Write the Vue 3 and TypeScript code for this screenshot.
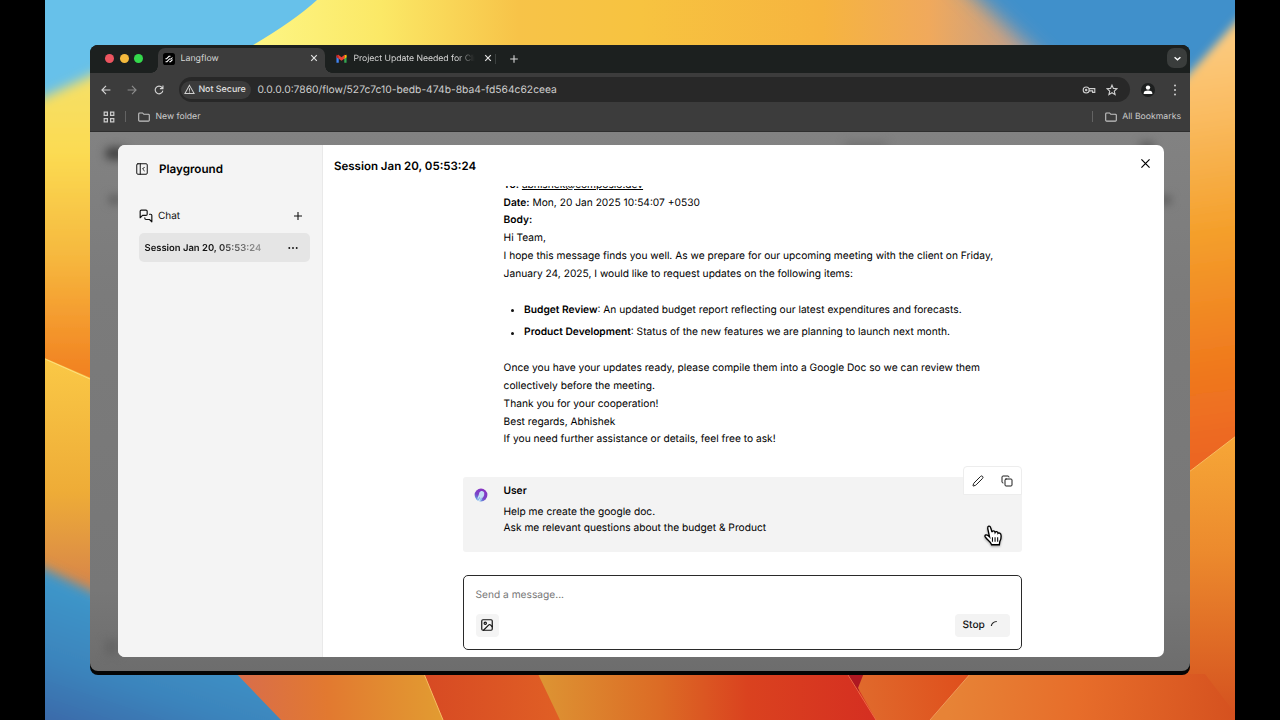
<script setup lang="ts">
interface Line {
  label?: string
  text?: string
}

const opening: Line[] = [
  { label: 'Date:', text: ' Mon, 20 Jan 2025 10:54:07 +0530' },
  { label: 'Body:' },
  { text: 'Hi Team,' },
  { text: 'I hope this message finds you well. As we prepare for our upcoming meeting with the client on Friday,' },
  { text: 'January 24, 2025, I would like to request updates on the following items:' },
]

const bullets: Line[] = [
  { label: 'Budget Review', text: ': An updated budget report reflecting our latest expenditures and forecasts.' },
  { label: 'Product Development', text: ': Status of the new features we are planning to launch next month.' },
]

const closing: string[] = [
  'Once you have your updates ready, please compile them into a Google Doc so we can review them',
  'collectively before the meeting.',
  'Thank you for your cooperation!',
  'Best regards, Abhishek',
  'If you need further assistance or details, feel free to ask!',
]

const session = 'Session Jan 20, 05:53:24'
</script>

<template>
  <div class="desktop">
    <svg class="wallpaper" viewBox="0 0 1280 720" aria-hidden="true">
      <defs>
        <filter id="soft" x="-20%" y="-20%" width="140%" height="140%"><feGaussianBlur stdDeviation="6" /></filter>
        <filter id="softer" x="-30%" y="-30%" width="160%" height="160%"><feGaussianBlur stdDeviation="10" /></filter>
        <filter id="softright" filterUnits="userSpaceOnUse" x="1130" y="-60" width="260" height="640"><feGaussianBlur stdDeviation="4.5" /></filter>
        <linearGradient id="top" gradientUnits="userSpaceOnUse" x1="260" y1="0" x2="1020" y2="0">
          <stop offset="0" stop-color="#fdf583" /><stop offset=".16" stop-color="#fbe866" />
          <stop offset=".34" stop-color="#f7c348" /><stop offset=".5" stop-color="#f7c340" />
          <stop offset=".74" stop-color="#f6b43f" /><stop offset=".88" stop-color="#f0a95c" /><stop offset="1" stop-color="#c4a089" />
        </linearGradient>
        <linearGradient id="left" gradientUnits="userSpaceOnUse" x1="0" y1="80" x2="0" y2="370">
          <stop offset="0" stop-color="#f6e067" /><stop offset=".25" stop-color="#fbdb52" />
          <stop offset=".6" stop-color="#f6b93f" /><stop offset="1" stop-color="#f28322" />
        </linearGradient>
        <linearGradient id="left2" gradientUnits="userSpaceOnUse" x1="0" y1="360" x2="0" y2="580">
          <stop offset="0" stop-color="#fac846" /><stop offset=".6" stop-color="#eeac37" /><stop offset="1" stop-color="#d98848" />
        </linearGradient>
        <linearGradient id="blue" gradientUnits="userSpaceOnUse" x1="110" y1="580" x2="60" y2="730">
          <stop offset="0" stop-color="#3f9bcd" /><stop offset=".6" stop-color="#3b84bc" /><stop offset="1" stop-color="#3a68a8" />
        </linearGradient>
        <linearGradient id="b1" gradientUnits="userSpaceOnUse" x1="245" y1="700" x2="440" y2="690">
          <stop offset="0" stop-color="#d96e49" /><stop offset=".42" stop-color="#e27930" /><stop offset="1" stop-color="#e29b31" />
        </linearGradient>
        <linearGradient id="b2" gradientUnits="userSpaceOnUse" x1="425" y1="0" x2="560" y2="0">
          <stop offset="0" stop-color="#d74a23" /><stop offset="1" stop-color="#e05f25" />
        </linearGradient>
        <linearGradient id="b3" gradientUnits="userSpaceOnUse" x1="540" y1="0" x2="875" y2="0">
          <stop offset="0" stop-color="#dd9433" /><stop offset=".36" stop-color="#dc6b25" />
          <stop offset=".62" stop-color="#da421f" /><stop offset="1" stop-color="#d52f21" />
        </linearGradient>
        <linearGradient id="b4" gradientUnits="userSpaceOnUse" x1="860" y1="700" x2="960" y2="680">
          <stop offset="0" stop-color="#e06a2c" /><stop offset="1" stop-color="#df501d" />
        </linearGradient>
        <linearGradient id="b5" gradientUnits="userSpaceOnUse" x1="950" y1="690" x2="1235" y2="720">
          <stop offset="0" stop-color="#e78336" /><stop offset=".45" stop-color="#e76d2a" /><stop offset="1" stop-color="#d5511f" />
        </linearGradient>
        <linearGradient id="right" gradientUnits="userSpaceOnUse" x1="1180" y1="50" x2="1235" y2="450">
          <stop offset="0" stop-color="#fcc97c" /><stop offset=".15" stop-color="#fabd64" />
          <stop offset=".45" stop-color="#f4a02c" /><stop offset=".78" stop-color="#f07a1e" /><stop offset="1" stop-color="#ec6623" />
        </linearGradient>
        <linearGradient id="right2" gradientUnits="userSpaceOnUse" x1="0" y1="440" x2="0" y2="720">
          <stop offset="0" stop-color="#f6a637" /><stop offset=".4" stop-color="#ec8a2d" /><stop offset="1" stop-color="#d4501f" />
        </linearGradient>
      </defs>
      <rect width="1280" height="720" fill="#67c1ea" />
      <path filter="url(#soft)" d="M10 113 L120 62 L140 420 L10 420Z" fill="url(#left)" />
      <path d="M317 0 Q294 21 253 45 L640 100 L1100 100 L1100 0Z" fill="url(#top)" />
      <path filter="url(#softer)" d="M946 -30 L1055 70 L1300 90 L1300 -30Z" fill="#4090cb" />
      <path filter="url(#softright)" d="M1300 -50 L1150 118 L1150 520 L1300 520Z" fill="url(#right)" />
      <path d="M40 356 L100 382 L100 600 L40 600Z" fill="url(#left2)" />
      <path d="M45 359 L90 379" stroke="#fde080" stroke-width="1" />
      <path filter="url(#soft)" d="M10 552 L110 600 L420 620 L420 780 L10 780Z" fill="url(#blue)" />
      <path d="M185 620 L460 620 L460 720 L281 720Z" fill="url(#b1)" />
      <path d="M406 630 L600 630 L600 720 L443 720Z" fill="url(#b2)" />
      <path d="M406 630 L443 720" stroke="#f6bd62" />
      <path d="M517 630 L890 630 L890 720 L560 720Z" fill="url(#b3)" />
      <path d="M820 630 L890 630 L858 692Z" fill="#ae1821" />
      <path d="M877 640 L1100 640 L1100 720 L876 720 L858 688Z" fill="url(#b4)" />
      <path d="M820 630 L876 720" stroke="#ee6a43" fill="none" />
      <path d="M1005 634 L1240 600 L1240 720 L930 720Z" fill="url(#b5)" />
      <path d="M1005 634 L930 720" stroke="#ee9959" />
      <path d="M1240 433 L1185 475 L1185 674 L1205 674 L1240 720Z" fill="url(#right2)" />
      <path d="M1240 433 L1185 475" stroke="#f8bb60" />
      <rect width="45" height="720" fill="#000" />
      <rect x="1235" width="45" height="720" fill="#000" />
    </svg>

    <div class="window">
      <div class="tabbar">
        <div class="lights"><i class="red" /><i class="yellow" /><i class="green" /></div>
        <div class="tab active">
          <svg class="favicon" viewBox="0 0 12 12">
            <rect width="12" height="12" rx="2.6" fill="#000" />
            <path d="M2.4 5.7H3.7L6 3.3H7.5M2.5 8.7H4L6.5 6H8L9.5 4.5M6.3 8.7H7.4L9.6 6.6" fill="none" stroke="#fff" stroke-width="1.05" />
          </svg>
          <span class="tab-title">Langflow</span>
          <svg class="close" viewBox="0 0 8 8"><path d="M1.2 1.2 6.8 6.8M6.8 1.2 1.2 6.8" /></svg>
        </div>
        <div class="tab second">
          <svg class="gmail" viewBox="0 0 12 9">
            <path d="M.5 1.6 V9 H3 V4Z" fill="#4285f4" />
            <path d="M11.5 1.6 V9 H9 V4Z" fill="#34a853" />
            <path d="M9 1 L11.5 .3 V3 L9 5Z" fill="#fbbc04" />
            <path d="M.5 .3 L3 1 V5 L.5 3Z" fill="#c5221f" />
            <path d="M2.2 .2 L6 3.2 L9.8 .2 L9 4.8 L6 7 L3 4.8Z" fill="#ea4335" />
          </svg>
          <span class="tab-title fade">Project Update Needed for Cli</span>
          <svg class="close" viewBox="0 0 8 8"><path d="M1.2 1.2 6.8 6.8M6.8 1.2 1.2 6.8" /></svg>
        </div>
        <i class="tab-sep" />
        <svg class="newtab" viewBox="0 0 10 10"><path d="M5 1.2V8.8M1.2 5H8.8" /></svg>
        <div class="tab-menu"><svg viewBox="0 0 8 8"><path d="M1.4 2.8 4 5.2 6.6 2.8" /></svg></div>
      </div>

      <div class="toolbar">
        <svg class="nav" viewBox="0 0 12 12"><path d="M10.8 6H1.8M6 1.6 1.6 6 6 10.4" /></svg>
        <svg class="nav dim" viewBox="0 0 12 12"><path d="M1.2 6H10.2M6 1.6 10.4 6 6 10.4" /></svg>
        <svg class="nav" viewBox="0 0 12 12"><path d="M10.2 6.6A4.2 4.2 0 1 1 9.4 3.4L10 4.3M10.3 1.2V4.5H7" /></svg>
        <div class="address">
          <div class="chip">
            <svg viewBox="0 0 12 12"><path d="M6 1.5 11 10.4H1Z" /><path d="M6 4.6V7.3M6 8.2V9.2" /></svg>
            <span>Not Secure</span>
          </div>
          <span class="url">0.0.0.0:7860/flow/527c7c10-bedb-474b-8ba4-fd564c62ceea</span>
          <svg class="key" viewBox="0 0 14 10"><circle cx="4.2" cy="5" r="3" /><circle cx="4.2" cy="5" r=".7" /><path d="M7 3.6H12.8V7.4H10.6V5.9H7" /></svg>
          <svg class="star" viewBox="0 0 12 12"><path d="M6 1.1 7.4 4.4 11 4.7 8.3 7.1 9.1 10.6 6 8.7 2.9 10.6 3.7 7.1 1 4.7 4.6 4.4Z" /></svg>
        </div>
        <svg class="profile" viewBox="0 0 14 14"><circle cx="7" cy="7" r="7" fill="#1d1f1f" /><circle cx="7" cy="4.6" r="2.2" fill="#fff" /><path d="M2.7 11V9.9Q3.2 7.5 7 7.5T11.3 9.9V11Z" fill="#fff" /></svg>
        <svg class="kebab" viewBox="0 0 4 12"><circle cx="2" cy="1.6" r="1" /><circle cx="2" cy="6" r="1" /><circle cx="2" cy="10.4" r="1" /></svg>
      </div>

      <div class="bookmarks">
        <svg class="apps" viewBox="0 0 12 12"><path d="M1.2 1.2H4.4V4.4H1.2ZM7.6 1.2H10.8V4.4H7.6ZM1.2 7.6H4.4V10.8H1.2ZM7.6 7.6H10.8V10.8H7.6Z" /></svg>
        <i class="bar" />
        <svg class="folder" viewBox="0 0 12 10"><path d="M1.6 1H4.6L5.8 2.3H10.4Q11.3 2.3 11.3 3.2V8.2Q11.3 9.1 10.4 9.1H1.6Q.7 9.1 .7 8.2V1.9Q.7 1 1.6 1Z" /></svg>
        <span>New folder</span>
        <i class="bar push" />
        <svg class="folder" viewBox="0 0 12 10"><path d="M1.6 1H4.6L5.8 2.3H10.4Q11.3 2.3 11.3 3.2V8.2Q11.3 9.1 10.4 9.1H1.6Q.7 9.1 .7 8.2V1.9Q.7 1 1.6 1Z" /></svg>
        <span>All Bookmarks</span>
      </div>

      <div class="page">
        <i class="ghost logo" /><i class="ghost node" /><i class="ghost controls" />
        <i class="ghost head" /><i class="ghost avatar" /><i class="ghost item" />
        <div class="modal">
          <aside class="sidebar">
            <div class="side-head">
              <svg class="panel lucide" viewBox="0 0 24 24"><rect x="3" y="3" width="18" height="18" rx="2" /><path d="M9 3v18M16 15l-3-3 3-3" /></svg>
              <h2>Playground</h2>
            </div>
            <div class="chat-row">
              <svg class="msgs lucide" viewBox="0 0 24 24"><path d="M14 9a2 2 0 0 1-2 2H6l-4 4V4c0-1.1.9-2 2-2h8a2 2 0 0 1 2 2zM18 9h2a2 2 0 0 1 2 2v11l-4-4h-6a2 2 0 0 1-2-2v-1" /></svg>
              <span>Chat</span>
              <svg class="plus" viewBox="0 0 10 10"><path d="M5 1V9M1 5H9" /></svg>
            </div>
            <div class="session">
              <span>{{ session }}</span>
              <svg viewBox="0 0 10 4"><circle cx="1.3" cy="2" r=".95" /><circle cx="5" cy="2" r=".95" /><circle cx="8.7" cy="2" r=".95" /></svg>
            </div>
          </aside>

          <main class="main">
            <header class="main-head">
              <h1>{{ session }}</h1>
              <svg viewBox="0 0 10 10"><path d="M1.3 1.3 8.7 8.7M8.7 1.3 1.3 8.7" /></svg>
            </header>
            <div class="scroll">
              <div class="reply">
                <p><b>To:</b> <u>abhishek@composio.dev</u></p>
                <p v-for="(l, i) in opening" :key="i"><b v-if="l.label">{{ l.label }}</b>{{ l.text }}</p>
                <ul>
                  <li v-for="b in bullets" :key="b.label"><b>{{ b.label }}</b>{{ b.text }}</li>
                </ul>
                <p v-for="c in closing" :key="c">{{ c }}</p>
              </div>
              <div class="user">
                <svg class="avatar-icon" viewBox="0 0 14 14">
                  <defs>
                    <linearGradient id="ring" x1=".8" y1="0" x2=".2" y2="1">
                      <stop offset="0" stop-color="#8a2fc0" /><stop offset=".6" stop-color="#7a45c8" /><stop offset="1" stop-color="#58b5e8" />
                    </linearGradient>
                  </defs>
                  <circle cx="7" cy="7" r="6.4" fill="url(#ring)" />
                  <path d="M3.6 12.4Q3 9.6 4.7 7Q4.9 4.2 7 3.1Q9.3 2.5 10.2 4.6Q10.6 7 9.3 9.1Q8.3 9.8 8 11L6.7 12.9Q5 13.3 3.6 12.4Z" fill="#c3dcf5" />
                  <path d="M3.8 12.1Q5.2 11.3 5.6 9.3M6.7 12.6 7.3 9.8" stroke="#6fa9e6" stroke-width=".9" fill="none" />
                </svg>
                <div class="user-text">
                  <h3>User</h3>
                  <p>Help me create the google doc.</p>
                  <p>Ask me relevant questions about the budget &amp; Product</p>
                </div>
                <div class="actions">
                  <svg class="lucide" viewBox="0 0 24 24"><path d="M21.17 6.81a1 1 0 0 0-3.99-3.99L3.84 16.17a2 2 0 0 0-.5.83l-1.32 4.35a.5.5 0 0 0 .62.62l4.35-1.32a2 2 0 0 0 .83-.5z" /></svg>
                  <svg class="lucide" viewBox="0 0 24 24"><rect x="8" y="8" width="14" height="14" rx="2" /><path d="M4 16c-1.1 0-2-.9-2-2V4c0-1.1.9-2 2-2h10c1.1 0 2 .9 2 2" /></svg>
                </div>
              </div>
            </div>
            <div class="composer">
              <div class="placeholder">Send a message...</div>
              <div class="composer-row">
                <div class="attach"><svg class="lucide" viewBox="0 0 24 24"><rect x="3" y="3" width="18" height="18" rx="2" /><circle cx="9" cy="9" r="2" /><path d="m21 15-3.09-3.09a2 2 0 0 0-2.82 0L6 21" /></svg></div>
                <div class="stop"><span>Stop</span><svg viewBox="0 0 10 10"><path d="M1.3 6Q2 1.8 6.8 1.5" /></svg></div>
              </div>
            </div>
          </main>
        </div>
      </div>
    </div>

    <svg class="cursor" viewBox="0 0 20 22">
      <path d="M6.2 12.3 4.5 4.4Q4.2 2.3 5.5 2Q6.8 1.8 7.3 3.6L8.6 7.8Q8.7 6.6 9.9 6.6Q11.2 6.6 11.5 8Q11.9 7.1 13 7.3Q14.2 7.6 14.3 8.9Q15 8.3 16 8.8Q17.3 9.5 17.3 11.5Q17.4 14.6 16 16.9L15.6 19.8H8.2Q7.6 17.9 5.2 15.8Q3 13.8 1.9 12Q1.5 10.8 2.7 10.5Q4.2 10.2 6.2 12.3Z" fill="#fff" stroke="#000" stroke-width="1.3" />
      <path d="M9 12.7V17M11.5 12.7V17M14 12.7V17" stroke="#000" stroke-width="1" fill="none" />
    </svg>
  </div>
</template>

<style>
html,
body {
  margin: 0;
  background: #000;
  overflow: hidden;
}
</style>

<style scoped>
* {
  box-sizing: border-box;
}
h1, h2, h3, p, ul {
  margin: 0;
  padding: 0;
  font-size: inherit;
}
svg, i {
  display: block;
  flex: none;
}
.desktop {
  position: relative;
  width: 1280px;
  height: 720px;
  padding: 45px 90px;
  overflow: hidden;
  font-family: Inter, "Liberation Sans", sans-serif;
  text-rendering: geometricPrecision;
}
.wallpaper {
  position: absolute;
  inset: 0;
  width: 1280px;
  height: 720px;
}
.window {
  position: relative;
  width: 1100px;
  height: 629.5px;
  border-radius: 8px;
  overflow: hidden;
  background: #050505;
  display: flex;
  flex-direction: column;
}
.tabbar {
  height: 28px;
  flex: none;
  background: #1c201f;
  display: flex;
  align-items: center;
}
.lights {
  display: flex;
  gap: 5.5px;
  padding: 0 0 1px 15px;
  width: 68px;
}
.lights i {
  width: 9px;
  height: 9px;
  border-radius: 50%;
}
.red { background: #ec5560; }
.yellow { background: #f4b93c; }
.green { background: #34d94c; }
.tab {
  display: flex;
  align-items: center;
  height: 25px;
  font-size: 8.8px;
  color: #d6d6d6;
}
.tab.active {
  position: relative;
  align-self: flex-end;
  width: 167px;
  padding: 0 7px 4px 5px;
  background: #3c3c3c;
  border-radius: 7px 7px 0 0;
}
.tab.active::before,
.tab.active::after {
  content: "";
  position: absolute;
  bottom: 0;
  width: 7px;
  height: 7px;
}
.tab.active::before {
  left: -7px;
  background: radial-gradient(circle at 0 0, transparent 6.5px, #3c3c3c 7px);
}
.tab.active::after {
  right: -7px;
  background: radial-gradient(circle at 100% 0, transparent 6.5px, #3c3c3c 7px);
}
.favicon {
  width: 12px;
  height: 12px;
  margin-right: 5.5px;
}
.tab-title {
  white-space: nowrap;
  overflow: hidden;
}
.close {
  width: 8px;
  height: 8px;
  margin-left: auto;
  fill: none;
  stroke: #e2e2e2;
  stroke-width: 1.2;
}
.second {
  width: 167px;
  padding: 0 0 1.5px 11px;
}
.second .tab-title {
  padding-top: 1px;
}
.gmail {
  width: 11px;
  height: 9px;
  margin-right: 6.5px;
}
.fade {
  width: 121px;
  font-size: 8.7px;
  letter-spacing: -.04px;
  mask-image: linear-gradient(90deg, #000 103px, transparent 121px);
}
.second .close {
  margin-right: 0.5px;
}
.tab-sep {
  width: 1px;
  height: 10px;
  margin-left: 3px;
  background: #3b403f;
}
.newtab {
  width: 10px;
  height: 10px;
  margin-left: 13px;
  fill: none;
  stroke: #d8d8d8;
  stroke-width: 1.1;
}
.tab .close,
.newtab {
  position: relative;
  top: -.5px;
}
.tab-menu {
  margin: -2px 3px 0 auto;
  width: 20px;
  height: 20px;
  border-radius: 7px;
  background: #3a3d3c;
  display: grid;
  place-items: center;
}
.tab-menu svg {
  width: 9px;
  height: 9px;
  fill: none;
  stroke: #fff;
  stroke-width: 1.2;
}
.toolbar {
  height: 33px;
  flex: none;
  background: #3c3c3c;
  display: flex;
  align-items: center;
  padding-left: 10px;
}
.nav {
  width: 12px;
  height: 12px;
  margin-right: 14.3px;
  padding: .5px;
  fill: none;
  stroke: #d4d4d4;
  stroke-width: 1.25;
}
.dim {
  stroke: #8b8b8b;
}
.address {
  width: 951.5px;
  height: 25px;
  border-radius: 13px;
  background: #282828;
  display: flex;
  align-items: center;
  padding: 0 11.5px 0 2px;
}
.chip {
  width: 70px;
  height: 18px;
  margin-left: .5px;
  border-radius: 9px;
  background: #3b3b3b;
  display: flex;
  align-items: center;
  padding-left: 2.5px;
  font-size: 8.9px;
  font-weight: 500;
  color: #e0e0e0;
  white-space: nowrap;
}
.chip svg {
  width: 11px;
  height: 11px;
  margin-right: 3.5px;
  fill: none;
  stroke: #d0d0d0;
  stroke-width: 1.1;
}
.url {
  margin-left: 6px;
  font-size: 10.29px;
  color: #cfcfcf;
}
.key {
  width: 14px;
  height: 10px;
  margin-left: auto;
  margin-right: 10px;
  fill: none;
  stroke: #cfcfcf;
  stroke-width: 1.1;
}
.star {
  width: 12px;
  height: 12px;
  fill: none;
  stroke: #cfcfcf;
  stroke-width: 1.1;
  margin-right: 1px;
}
.profile {
  width: 14px;
  height: 14px;
  margin-left: 11px;
}
.kebab {
  width: 4px;
  height: 12px;
  margin-left: 18px;
  fill: #d2d2d2;
}
.bookmarks {
  height: 26px;
  flex: none;
  padding: 0 9px 4px 13px;
  background: #3c3c3c;
  border-bottom: 1px solid #2e2e2e;
  display: flex;
  align-items: center;
  font-size: 8.7px;
  color: #cbcbcb;
}
.bookmarks span {
  padding-top: 1px;
}
.apps {
  width: 12px;
  height: 12px;
  fill: none;
  stroke: #cbcbcb;
  stroke-width: 1.2;
}
.bar {
  width: 1px;
  height: 11px;
  margin: 0 12px 0 10px;
  background: #636363;
}
.bar.push {
  margin-left: auto;
}
.folder {
  width: 12px;
  height: 10px;
  margin-right: 5.5px;
  fill: none;
  stroke: #c4c4c4;
  stroke-width: 1.1;
}
.page {
  position: relative;
  height: 539px;
  flex: none;
  padding: 13.2px 26px 0 28px;
  background: linear-gradient(#828282, #7b7b7b 30%, #777 85%, #6d6d6d);
  border-radius: 0 0 8px 8px;
  overflow: hidden;
}
.ghost {
  position: absolute;
  filter: blur(4px);
  background: #454545;
}
.logo { left: 15px; top: 15px; width: 22px; height: 13px; border-radius: 6px; }
.node { left: 19px; top: 63px; width: 12px; height: 9px; background: #5f5f5f; }
.controls { left: 15px; top: 508px; width: 14px; height: 15px; background: #656565; }
.head { left: 755px; top: 10px; width: 42px; height: 7px; background: #707070; }
.avatar { left: 1050px; top: 10px; width: 14px; height: 9px; background: #5a5a5a; }
.item { left: 1066px; top: 64px; width: 15px; height: 8px; background: #5c5c5c; }
.modal {
  position: relative;
  width: 1046px;
  height: 512px;
  display: flex;
  border-radius: 7px;
  background: #fff;
  overflow: hidden;
}
.lucide {
  fill: none;
  stroke: #111;
  stroke-width: 2;
  stroke-linecap: round;
  stroke-linejoin: round;
}
.sidebar {
  width: 205px;
  flex: none;
  background: #f4f4f4;
  border-right: 1px solid #e9e9e9;
  color: #111;
}
.side-head {
  display: flex;
  align-items: center;
  height: 18px;
  margin-top: 15px;
  padding-left: 17px;
}
.side-head h2 {
  font-size: 11.65px;
  font-weight: 600;
  color: #000;
}
.panel {
  width: 14px;
  height: 14px;
  margin-right: 10px;
  stroke-width: 1.7;
}
.chat-row {
  display: flex;
  align-items: center;
  height: 18px;
  margin: 29px 19px 0 20.5px;
  font-size: 10px;
}
.msgs {
  width: 14px;
  height: 14px;
  margin-right: 5.5px;
}
.plus {
  width: 10px;
  height: 10px;
  margin-left: auto;
  fill: none;
  stroke: #111;
  stroke-width: 1.1;
}
.session {
  display: flex;
  align-items: center;
  height: 29px;
  margin: 8px 12px 0 20.5px;
  padding: 0 12.5px 0 6px;
  border-radius: 5px;
  background: #e5e5e5;
}
.session span {
  padding-top: 1.6px;
  font-size: 9.45px;
  font-weight: 600;
  color: transparent;
  background: linear-gradient(90deg, #111 58%, #999 100%);
  background-clip: text;
}
.session svg {
  width: 10px;
  height: 4px;
  margin-left: auto;
  fill: #111;
}
.main {
  flex: 1;
  display: flex;
  flex-direction: column;
}
.main-head {
  display: flex;
  justify-content: space-between;
  align-items: center;
  height: 40.8px;
  padding: 1px 13px 0 11px;
}
.main-head h1 {
  font-size: 11.5px;
  font-weight: 600;
  color: #000;
}
.main-head svg {
  width: 11px;
  height: 11px;
  margin-top: -6px;
  fill: none;
  stroke: #000;
  stroke-width: 1.1;
}
.scroll {
  width: 559px;
  height: 389px;
  margin: 0 0 0 140px;
  overflow: hidden;
  display: flex;
  flex-direction: column;
}
.reply {
  margin-top: -9.3px;
  padding-left: 40.6px;
  font-size: 10.21px;
  line-height: 17.86px;
  color: #000;
}
.reply p {
  white-space: nowrap;
}
.reply b {
  font-weight: 600;
}
.reply ul {
  list-style: none;
  margin: 17.7px 0 17.7px;
}
.reply li {
  position: relative;
  padding-left: 20.5px;
}
.reply li + li {
  margin-top: 5.1px;
}
.reply li::before {
  content: "";
  position: absolute;
  left: 7.2px;
  top: 7.2px;
  width: 3.5px;
  height: 3.5px;
  border-radius: 50%;
  background: #111;
}
.user {
  position: relative;
  display: flex;
  flex: none;
  height: 75px;
  margin-top: 27.8px;
  padding-left: 10.5px;
  background: #f3f3f3;
  border-radius: 3px;
  font-size: 10.21px;
  line-height: 15.7px;
  color: #000;
}
.avatar-icon {
  width: 14px;
  height: 14px;
  margin: 11px 16px 0 0;
}
.user h3 {
  margin: 6.6px 0 5.4px;
  font-weight: 600;
  color: #000;
}
.actions {
  position: absolute;
  right: 0;
  top: -11px;
  width: 59px;
  height: 29px;
  border: 1px solid #ededed;
  border-radius: 4px 4px 0 0;
  background: #fff;
  display: flex;
  align-items: center;
  justify-content: center;
  gap: 17px;
}
.actions svg {
  width: 12px;
  height: 12px;
  stroke-width: 1.9;
}
.composer {
  width: 559px;
  height: 75px;
  margin: 0 0 0 140px;
  border: 1px solid #2a2a2a;
  border-radius: 5px;
  padding: 12px 11px 0 11.5px;
}
.placeholder {
  height: 14px;
  line-height: 14px;
  font-size: 10.2px;
  color: #777;
}
.composer-row {
  display: flex;
  justify-content: space-between;
  margin-top: 12px;
}
.attach {
  width: 23px;
  height: 23px;
  border-radius: 4px;
  background: #f4f4f4;
  display: grid;
  place-items: center;
}
.attach svg {
  width: 14px;
  height: 14px;
}
.stop {
  width: 55px;
  height: 23px;
  border-radius: 4px;
  background: #f3f3f3;
  display: flex;
  align-items: center;
  padding-left: 7.5px;
  font-size: 10.2px;
  font-weight: 500;
  color: #111;
}
.stop svg {
  width: 10px;
  height: 10px;
  margin: -1px 0 0 5px;
  fill: none;
  stroke: #222;
  stroke-width: 1.2;
}
.cursor {
  position: absolute;
  left: 983px;
  top: 524px;
  width: 21px;
  height: 23px;
  filter: drop-shadow(0 1px 1px rgba(0, 0, 0, .35));
}
</style>
